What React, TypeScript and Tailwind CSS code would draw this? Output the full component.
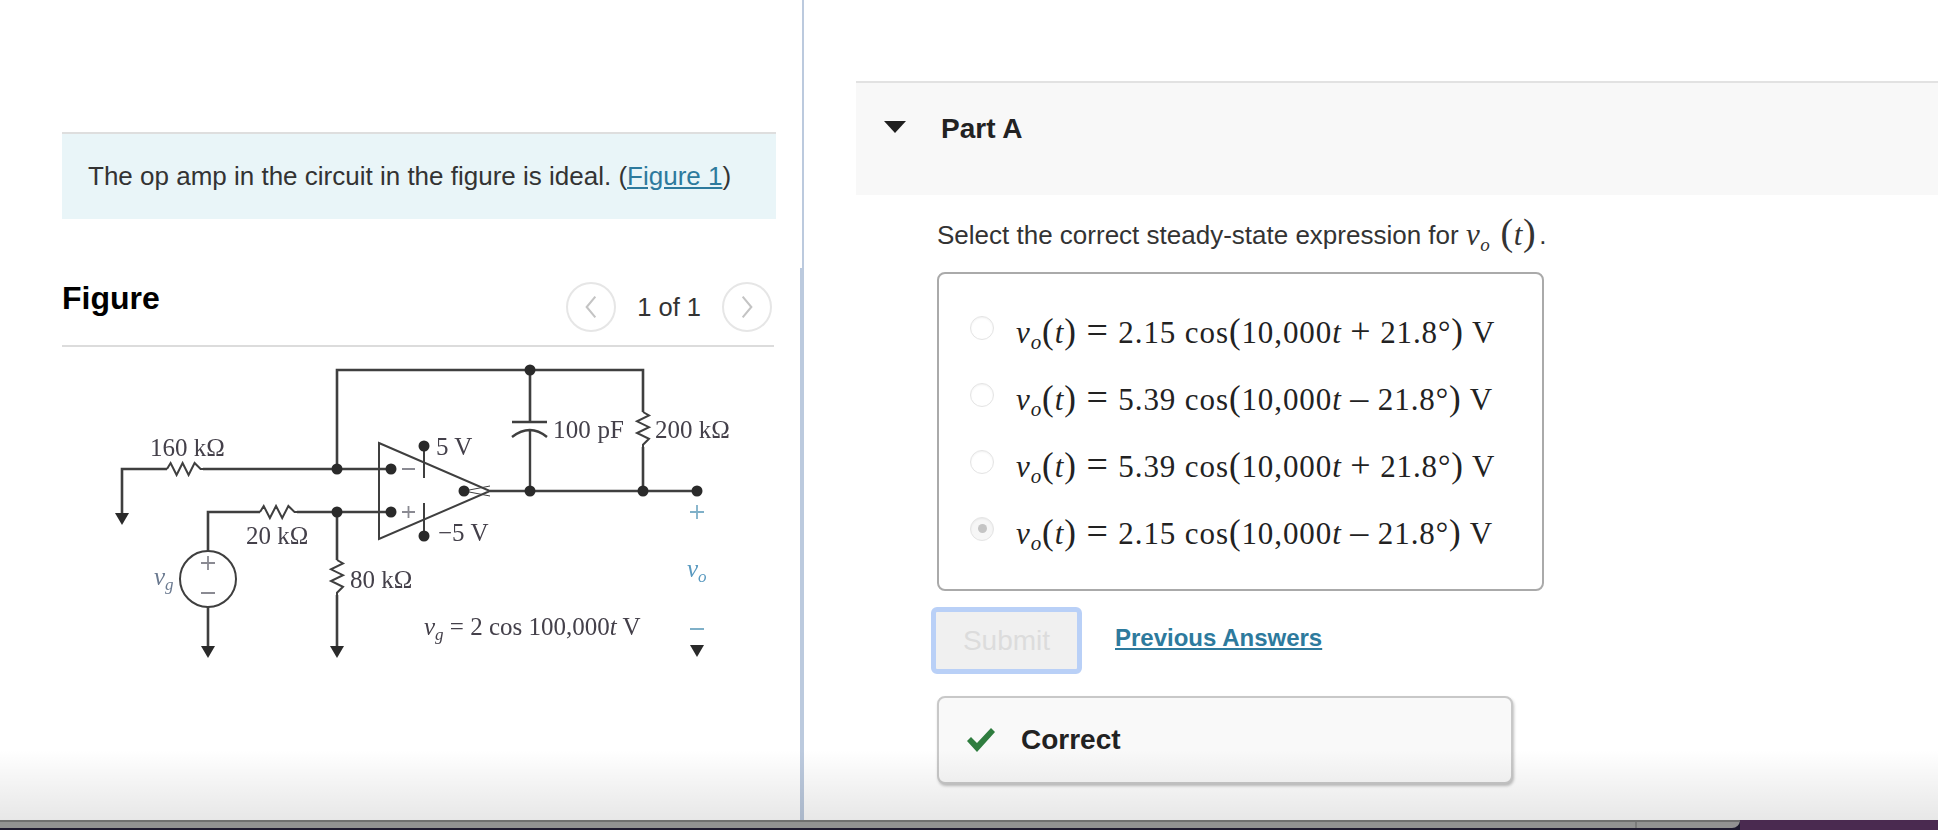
import React from "react";

const sans = "font-['Liberation_Sans',Arial,sans-serif]";
const serif = "font-['Liberation_Serif','Times_New_Roman',serif]";

function zigH(x: number, y: number, w: number) {
  const s = w / 6;
  let d = `M${x} ${y}`;
  [-6, 6, -6, 6, -6, 0].forEach((o, i) => {
    d += ` L${x + s * (i + 0.6)} ${y + o}`;
  });
  return d + ` L${x + w} ${y}`;
}
function zigV(x: number, y: number, h: number) {
  const s = h / 6;
  let d = `M${x} ${y}`;
  [6, -6, 6, -6, 6, 0].forEach((o, i) => {
    d += ` L${x + o} ${y + s * (i + 0.6)}`;
  });
  return d + ` L${x} ${y + h}`;
}

function Circuit() {
  const dots: [number, number][] = [
    [337, 469], [391, 469], [337, 512], [391, 512], [530, 370], [530, 491],
    [643, 491], [697, 491], [464, 491], [424, 446], [424, 536],
  ];
  const arrows: [number, number][] = [[122, 513], [208, 646], [337, 646], [697, 645]];
  const t = "#44404a";
  return (
    <svg viewBox="62 350 714 320" className="mt-[3px] h-[320px] w-[714px] blur-[0.5px]">
      <g fill="none" stroke="#3f3f3f" strokeWidth="2.6">
        <path d="M337 469 V370 H643 V412" />
        <path d={zigV(643, 412, 35)} strokeWidth="2" />
        <path d="M643 447 V491" />
        <path d="M122 513 V469 H167" />
        <path d={zigH(167, 469, 36)} strokeWidth="2" />
        <path d="M203 469 H391" />
        <path d="M208 552 V512 H260" />
        <path d={zigH(260, 512, 37)} strokeWidth="2" />
        <path d="M297 512 H391" />
        <path d="M337 512 V560" />
        <path d={zigV(337, 560, 35)} strokeWidth="2" />
        <path d="M337 595 V646" />
        <circle cx="208" cy="579" r="28" strokeWidth="2" />
        <path d="M208 607 V646" />
        <path d="M379 443 L490 491 L379 539 Z" strokeWidth="2" />
        <path d="M490 491 H697" />
        <path d="M530 370 V422 M512 422 H547" />
        <path d="M512 437 Q530 423 547 437 M530 430 V491" strokeWidth="2.4" />
        <path d="M424 446 V478 M424 503 V536" strokeWidth="2" />
        <path d="M464 491 L490 486 M464 491 L490 496" strokeWidth="1" />
      </g>
      <g stroke="#8a8a92" strokeWidth="1.8" fill="none">
        <path d="M402 469 H415 M402 512 H415 M408.5 506 V518" />
        <path d="M201 563 H215 M208 556 V570 M201 593 H215" />
      </g>
      <g stroke="#7fb0c8" strokeWidth="1.8" fill="none">
        <path d="M690 512 H704 M697 505 V519 M690 629 H704" />
      </g>
      <g fill="#2a2a2a">
        {dots.map(([x, y]) => (
          <circle key={`${x}-${y}`} cx={x} cy={y} r="5.5" />
        ))}
        {arrows.map(([x, y]) => (
          <path key={`${x}-${y}`} d={`M${x - 7} ${y} H${x + 7} L${x} ${y + 12} Z`} />
        ))}
      </g>
      <g fontFamily="'Liberation Serif', serif" fontSize="25" fill={t}>
        <text x="150" y="456">160 kΩ</text>
        <text x="246" y="544">20 kΩ</text>
        <text x="350" y="588">80 kΩ</text>
        <text x="436" y="455">5 V</text>
        <text x="438" y="541">−5 V</text>
        <text x="553" y="438" textLength="71">100 pF</text>
        <text x="655" y="438">200 kΩ</text>
        <text x="154" y="585" fontStyle="italic" fill="#6b7a90">
          v<tspan fontSize="17" dy="5">g</tspan>
        </text>
        <text x="687" y="577" fontStyle="italic" fill="#5a9ac0">
          v<tspan fontSize="17" dy="5">o</tspan>
        </text>
        <text x="424" y="635">
          <tspan fontStyle="italic">v</tspan>
          <tspan fontStyle="italic" fontSize="17" dy="5">g</tspan>
          <tspan dy="-5"> = 2 cos 100,000</tspan>
          <tspan fontStyle="italic">t</tspan>
          <tspan> V</tspan>
        </text>
      </g>
    </svg>
  );
}

function VO() {
  return (
    <span className="whitespace-nowrap">
      <i>v</i>
      <i className="relative top-[6px] text-[21px]">o</i>
      <span className="text-[35px] leading-none">(</span>
      <i>t</i>
      <span className="text-[35px] leading-none">)</span>
    </span>
  );
}

function Option({ a, op, sel }: { a: string; op: string; sel?: boolean }) {
  return (
    <div className="flex h-[67px] items-center">
      <span
        className={`mb-[7px] ml-[31px] flex h-[24px] w-[24px] shrink-0 items-center justify-center rounded-full border border-[#e4e4e4] shadow-[inset_0_1px_2px_rgba(0,0,0,0.06)] ${
          sel ? "bg-[#f6f6f6]" : "bg-white"
        }`}
      >
        {sel && <span className="h-[9px] w-[9px] rounded-full bg-[#c4c4c4]" />}
      </span>
      <div className={`mb-[2px] ml-[22px] whitespace-pre text-[31px] leading-none tracking-[0.9px] text-[#222] ${serif}`}>
        <VO />
        {" "}
        <span className="mx-[1px] text-[38px] leading-none">=</span>
        {` ${a} cos`}
        <span className="text-[35px] leading-none">(</span>
        {"10,000"}
        <i>t</i>
        {" "}
        <span className="text-[36px] leading-none">{op}</span>
        {" 21.8°"}
        <span className="text-[35px] leading-none">)</span>
        {" V"}
      </div>
    </div>
  );
}

export default function App() {
  return (
    <div className={`relative flex h-[830px] w-[1938px] flex-col overflow-hidden bg-white ${sans}`}>
      <div className="flex min-h-0 flex-1">
        <div className="w-[800px] shrink-0 pl-[62px] pt-[132px]">
          <div className="flex h-[87px] w-[714px] items-center border-t-2 border-[#dedede] bg-[#e9f5f8] pl-[26px] text-[26px] text-[#333]">
            <span>
              The op amp in the circuit in the figure is ideal. (
              <span className="text-[#2d7a9d] underline underline-offset-2">Figure 1</span>)
            </span>
          </div>
          <div className="mt-[63px] flex h-[65px] w-[712px] items-start justify-between border-b-2 border-[#dcdcdc]">
            <span className="text-[32px] font-bold leading-[32px] text-black">Figure</span>
            <div className="flex items-center">
              <span className="flex h-[50px] w-[50px] items-center justify-center rounded-full border-2 border-[#e6e6e6] text-[#c4c4c4]">
                <svg viewBox="0 0 20 30" className="h-[26px] w-[18px]" fill="none" stroke="currentColor" strokeWidth="2.4">
                  <path d="M15 3 L5 15 L15 27" />
                </svg>
              </span>
              <span className="mx-[21px] text-[25.5px] text-[#333]">1 of 1</span>
              <span className="mr-[2px] flex h-[50px] w-[50px] items-center justify-center rounded-full border-2 border-[#e6e6e6] text-[#c4c4c4]">
                <svg viewBox="0 0 20 30" className="h-[26px] w-[18px]" fill="none" stroke="currentColor" strokeWidth="2.4">
                  <path d="M5 3 L15 15 L5 27" />
                </svg>
              </span>
            </div>
          </div>
          <Circuit />
        </div>

        <div className="flex w-[4px] shrink-0 flex-col">
          <div className="ml-auto h-[268px] w-[2px] bg-[#bccade]" />
          <div className="w-full flex-1 bg-[#bccade]" />
        </div>

        <div className="min-w-0 flex-1 pl-[52px] pt-[81px]">
          <div className="flex h-[114px] items-start border-t-2 border-[#e2e2e2] bg-[#f8f8f8] pl-[28px] pt-[28px]">
            <span className="mt-[10px] h-0 w-0 border-x-[11px] border-t-[12px] border-x-transparent border-t-[#1f1f1f]" />
            <span className="ml-[35px] text-[28px] font-bold leading-[36px] text-[#222]">Part A</span>
          </div>
          <div className="pl-[81px]">
            <div className="mt-[20px] flex h-[40px] items-center whitespace-pre text-[26px] text-[#333]">
              {"Select the correct steady-state expression for "}
              <span className={`text-[#333] ${serif} text-[31px] tracking-[0.6px]`}>
                <i>v</i>
                <i className="relative top-[6px] text-[19px]">o</i>
                <span className="text-[38px] leading-none"> (</span>
                <i>t</i>
                <span className="text-[38px] leading-none">)</span>
              </span>
              <span className="ml-[3px]">.</span>
            </div>
            <div className="mt-[17px] flex h-[319px] w-[607px] flex-col justify-center rounded-[8px] border-2 border-[#aaaaaa]">
              <Option a="2.15" op="+" />
              <Option a="5.39" op="–" />
              <Option a="5.39" op="+" />
              <Option a="2.15" op="–" sel />
            </div>
            <div className="-ml-[6px] mt-[16px] flex items-start">
              <button className="h-[67px] w-[151px] rounded-[6px] border-[5px] border-[#b9d0f7] bg-[#f0f0f0] text-[28px] text-[#dcdcdc]">
                Submit
              </button>
              <span className="ml-[33px] mt-[15px] text-[24px] font-bold leading-[32px] text-[#2d7a9d] underline underline-offset-2">
                Previous Answers
              </span>
            </div>
            <div className="mt-[22px] flex h-[88px] w-[576px] items-center rounded-[8px] border-2 border-[#c8c8c8] bg-[#f9f9f9] pl-[28px] shadow-[1px_2px_3px_rgba(0,0,0,0.25)]">
              <svg viewBox="0 0 28 24" className="h-[24px] w-[28px]" fill="#2f7d3f">
                <path d="M0 13 L4 9 L10 15 L24 0 L28 4 L10 24 Z" />
              </svg>
              <span className="ml-[26px] text-[28px] font-bold text-[#222]">Correct</span>
            </div>
          </div>
        </div>
      </div>

      <div className="flex h-[10px] shrink-0">
        <div className="flex w-[1740px] flex-col bg-[#1f1a30]">
          <div className="flex h-[8px] rounded-br-[10px] border-t-2 border-[#6f6f6f] bg-[#929292]">
            <div className="ml-[1635px] w-[2px] bg-[#7a7a7a]" />
          </div>
        </div>
        <div className="flex-1 bg-[#4a2a50]" />
      </div>

      <div className="pointer-events-none absolute bottom-[10px] left-0 right-0 h-[70px] bg-gradient-to-b from-[#ffffff00] to-[#00000018]" />
    </div>
  );
}
